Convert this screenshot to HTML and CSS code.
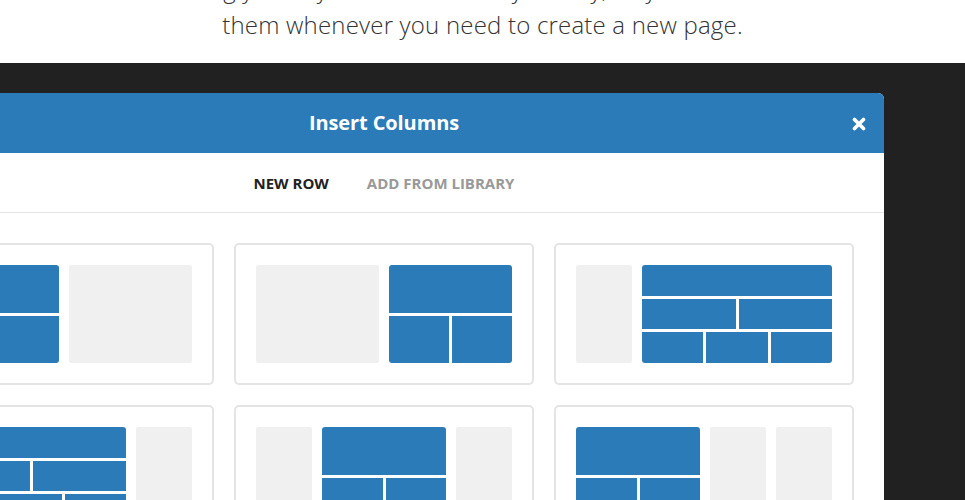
FILE: index.html
```html
<!DOCTYPE html>
<html lang="en">
<head>
<meta charset="utf-8">
<title>Insert Columns</title>
<link rel="stylesheet" href="styles.css">
</head>
<body>
<section class="intro">
  <p class="intro-text">Saving your layouts to the library is easy, so you can reuse<br>them whenever you need to create a new page.</p>
</section>
<section class="stage">
  <div class="modal">
    <header class="modal-header">
      <span></span>
      <h2 class="modal-title">Insert Columns</h2>
      <button class="close" aria-label="Close">
        <svg width="14" height="14" viewBox="0 0 14 14"><path d="M2.5 2.5 L11.5 11.5 M11.5 2.5 L2.5 11.5" stroke="#fff" stroke-width="3.6" stroke-linecap="round"/></svg>
      </button>
    </header>
    <nav class="tabs">
      <span class="tab active">New Row</span>
      <span class="tab">Add from Library</span>
    </nav>
    <div class="layouts">
      <div class="card"><div class="thumb">
        <div class="blue"><div class="r"><div class="c"></div></div><div class="r"><div class="c"></div><div class="c"></div></div></div>
        <div class="gray"></div>
      </div></div>
      <div class="card"><div class="thumb">
        <div class="gray"></div>
        <div class="blue"><div class="r"><div class="c"></div></div><div class="r"><div class="c"></div><div class="c"></div></div></div>
      </div></div>
      <div class="card"><div class="thumb">
        <div class="gray narrow"></div>
        <div class="blue"><div class="r"><div class="c"></div></div><div class="r"><div class="c"></div><div class="c"></div></div><div class="r"><div class="c"></div><div class="c"></div><div class="c"></div></div></div>
      </div></div>
      <div class="card"><div class="thumb">
        <div class="blue"><div class="r"><div class="c"></div></div><div class="r"><div class="c"></div><div class="c"></div></div><div class="r"><div class="c"></div><div class="c"></div><div class="c"></div></div></div>
        <div class="gray narrow"></div>
      </div></div>
      <div class="card"><div class="thumb">
        <div class="gray narrow"></div>
        <div class="blue"><div class="r"><div class="c"></div></div><div class="r"><div class="c"></div><div class="c"></div></div></div>
        <div class="gray narrow"></div>
      </div></div>
      <div class="card"><div class="thumb">
        <div class="blue"><div class="r"><div class="c"></div></div><div class="r"><div class="c"></div><div class="c"></div></div></div>
        <div class="gray narrow"></div>
        <div class="gray narrow"></div>
      </div></div>
    </div>
  </div>
</section>
</body>
</html>
```
FILE: styles.css
```css
* { box-sizing: border-box; }
html, body { margin: 0; padding: 0; }
body {
  width: 965px;
  height: 500px;
  overflow: hidden;
  background: #212121;
  font-family: "Open Sans", "Liberation Sans", sans-serif;
}
.intro {
  background: #fff;
  height: 63px;
  overflow: hidden;
}
.intro-text {
  margin: -29px 0 0;
  text-align: center;
  font-family: "Open Sans", "Lato", sans-serif;
  font-weight: 300;
  font-size: 24px;
  line-height: 36px;
  letter-spacing: 0.2px;
  color: #333;
  white-space: nowrap;
}
.stage {
  padding-top: 30px;
  height: 437px;
  overflow: hidden;
}
.modal {
  width: 1000px;
  margin-left: -116px;
  background: #fff;
  border-radius: 6px 6px 0 0;
  height: 500px;
}
.modal-header {
  height: 60px;
  background: #2a7bb7;
  border-radius: 6px 6px 0 0;
  display: grid;
  grid-template-columns: 1fr auto 1fr;
  align-items: center;
}
.modal-title {
  margin: 0 0 2px;
  color: #fff;
  font-size: 20px;
  font-weight: 700;
  letter-spacing: -0.1px;
}
.close {
  justify-self: end;
  margin-right: 18px;
  margin-top: 1px;
  width: 14px;
  height: 14px;
  padding: 0;
  border: 0;
  background: none;
  display: flex;
}
.tabs {
  height: 60px;
  border-bottom: 1px solid #e5e5e5;
  display: flex;
  justify-content: center;
  align-items: center;
  gap: 38px;
}
.tab {
  text-transform: uppercase;
  font-size: 15px;
  font-weight: 700;
  letter-spacing: 0;
  color: #999;
}
.tab.active { color: #222; }
.layouts {
  padding: 30px;
  display: grid;
  grid-template-columns: repeat(3, 300px);
  gap: 20px;
}
.card {
  height: 142px;
  border: 2px solid #e4e4e4;
  border-radius: 5px;
  padding: 20px;
}
.thumb {
  height: 98px;
  display: flex;
  gap: 10px;
}
.gray {
  flex: 1;
  background: #f0f0f0;
  border-radius: 2px;
}
.gray.narrow { flex: 0 0 56px; }
.blue {
  flex: 1;
  display: flex;
  flex-direction: column;
  gap: 3px;
  border-radius: 3px;
  overflow: hidden;
}
.blue .r {
  flex: 1;
  display: flex;
  gap: 3px;
}
.blue .c {
  flex: 1;
  background: #2a7bb7;
}
```
